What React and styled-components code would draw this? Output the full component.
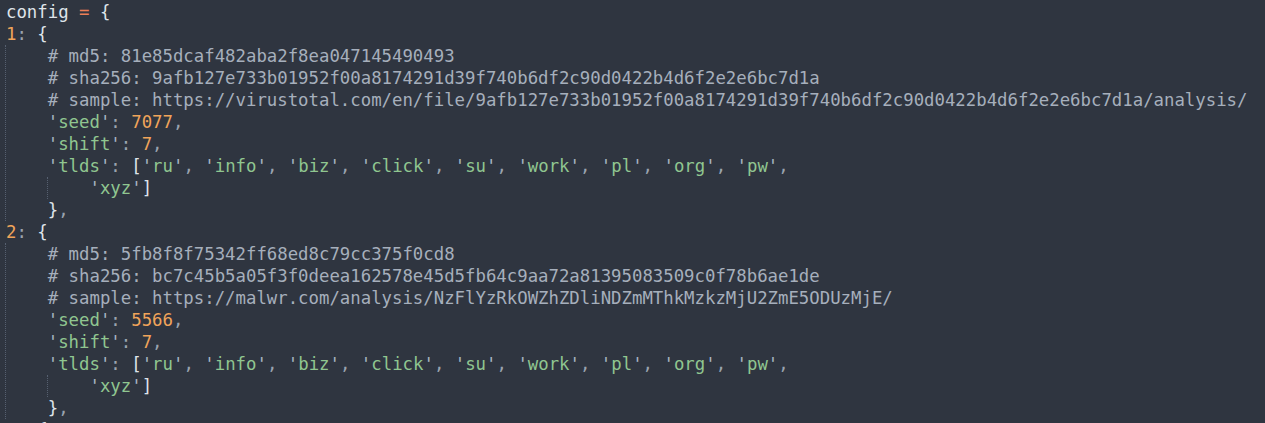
import React from 'react';
import styled, { createGlobalStyle } from 'styled-components';

const GlobalStyle = createGlobalStyle`
  html, body {
    margin: 0;
    padding: 0;
    background: #2f3540;
  }
`;

const Editor = styled.div`
  height: 423px;
  overflow: hidden;
  padding: 1px 0 0 6px;
  background: #2f3540;
  font-family: "DejaVu Sans Mono", "Liberation Mono", monospace;
  font-size: 17.33px;
  line-height: 22px;
  color: #dfe4ea;
`;

const Line = styled.div`
  white-space: pre;
  height: 22px;
`;

const Block = styled.div`
  margin-left: ${(p) => (p.$indent ? `calc(${p.$indent}ch - 1px)` : '-1px')};
  border-left: 1px dotted #566070;
`;

const Plain = styled.span`
  color: #dfe4ea;
`;

const Op = styled.span`
  color: #ec7f57;
`;

const Num = styled.span`
  color: #f0a45a;
`;

const Punct = styled.span`
  color: #9aa3af;
`;

const Comment = styled.span`
  color: #a6afbc;
`;

const Quote = styled.span`
  color: #a7b5c4;
`;

const StrText = styled.span`
  color: #90c690;
`;

const Str = ({ children }) => (
  <>
    <Quote>'</Quote>
    <StrText>{children}</StrText>
    <Quote>'</Quote>
  </>
);

const tlds = ['ru', 'info', 'biz', 'click', 'su', 'work', 'pl', 'org', 'pw'];

const configs = [
  {
    id: 1,
    md5: '81e85dcaf482aba2f8ea047145490493',
    sha256: '9afb127e733b01952f00a8174291d39f740b6df2c90d0422b4d6f2e2e6bc7d1a',
    sample:
      'https://virustotal.com/en/file/9afb127e733b01952f00a8174291d39f740b6df2c90d0422b4d6f2e2e6bc7d1a/analysis/',
    seed: '7077',
  },
  {
    id: 2,
    md5: '5fb8f8f75342ff68ed8c79cc375f0cd8',
    sha256: 'bc7c45b5a05f3f0deea162578e45d5fb64c9aa72a81395083509c0f78b6ae1de',
    sample: 'https://malwr.com/analysis/NzFlYzRkOWZhZDliNDZmMThkMzkzMjU2ZmE5ODUzMjE/',
    seed: '5566',
  },
];

const Entry = ({ cfg }) => (
  <>
    <Line>
      <Num>{cfg.id}</Num>
      <Punct>:</Punct> <Plain>{'{'}</Plain>
    </Line>
    <Block>
      <Line>
        {'    '}
        <Comment># md5: {cfg.md5}</Comment>
      </Line>
      <Line>
        {'    '}
        <Comment># sha256: {cfg.sha256}</Comment>
      </Line>
      <Line>
        {'    '}
        <Comment># sample: {cfg.sample}</Comment>
      </Line>
      <Line>
        {'    '}
        <Str>seed</Str>
        <Punct>:</Punct> <Num>{cfg.seed}</Num>
        <Punct>,</Punct>
      </Line>
      <Line>
        {'    '}
        <Str>shift</Str>
        <Punct>:</Punct> <Num>7</Num>
        <Punct>,</Punct>
      </Line>
      <Line>
        {'    '}
        <Str>tlds</Str>
        <Punct>:</Punct> <Plain>[</Plain>
        {tlds.map((t, i) => (
          <React.Fragment key={t}>
            {i > 0 && ' '}
            <Str>{t}</Str>
            <Punct>,</Punct>
          </React.Fragment>
        ))}
      </Line>
      <Block $indent={4}>
        <Line>
          {'    '}
          <Str>xyz</Str>
          <Plain>]</Plain>
        </Line>
      </Block>
      <Line>
        {'    '}
        <Plain>{'}'}</Plain>
        <Punct>,</Punct>
      </Line>
    </Block>
  </>
);

export default function App() {
  return (
    <>
      <GlobalStyle />
      <Editor>
        <Line>
          <Plain>config</Plain> <Op>=</Op> <Plain>{'{'}</Plain>
        </Line>
        {configs.map((cfg) => (
          <Entry key={cfg.id} cfg={cfg} />
        ))}
        <Line>
          <Num>3</Num>
          <Punct>:</Punct> <Plain>{'{'}</Plain>
        </Line>
      </Editor>
    </>
  );
}
